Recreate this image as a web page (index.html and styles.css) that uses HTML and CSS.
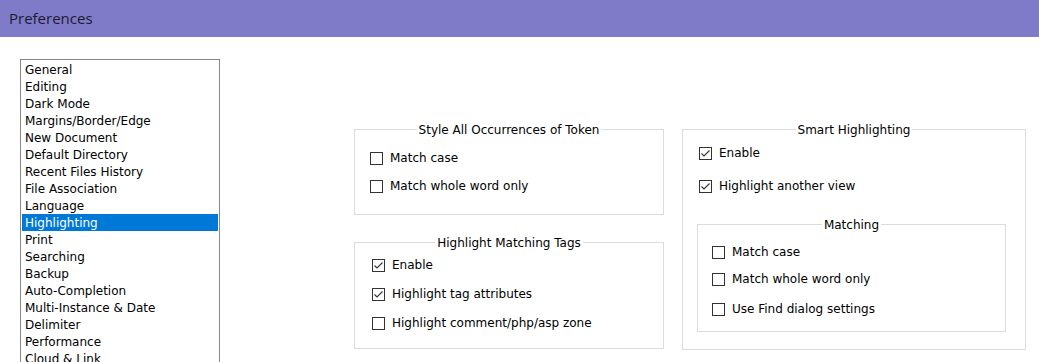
FILE: index.html
```html
<!DOCTYPE html>
<html lang="en">
<head>
  <meta charset="UTF-8">
  <title>Preferences</title>
  <link rel="stylesheet" href="styles.css">
</head>
<body>
  <div class="titlebar">Preferences</div>

  <div class="main">
    <ul class="cats">
      <li>General</li>
      <li>Editing</li>
      <li>Dark Mode</li>
      <li>Margins/Border/Edge</li>
      <li>New Document</li>
      <li>Default Directory</li>
      <li>Recent Files History</li>
      <li>File Association</li>
      <li>Language</li>
      <li class="selected">Highlighting</li>
      <li>Print</li>
      <li>Searching</li>
      <li>Backup</li>
      <li>Auto-Completion</li>
      <li>Multi-Instance &amp; Date</li>
      <li>Delimiter</li>
      <li>Performance</li>
      <li>Cloud &amp; Link</li>
    </ul>

    <div class="col col-left">
      <div class="group g-token">
        <div class="group-title">Style All Occurrences of Token</div>
        <div class="check-row"><span class="box"></span>Match case</div>
        <div class="check-row"><span class="box"></span>Match whole word only</div>
      </div>

      <div class="group g-tags">
        <div class="group-title">Highlight Matching Tags</div>
        <div class="check-row"><span class="box checked"><svg viewBox="0 0 11 11"><polyline points="1.5,5.5 4,8 9.5,2.5"/></svg></span>Enable</div>
        <div class="check-row"><span class="box checked"><svg viewBox="0 0 11 11"><polyline points="1.5,5.5 4,8 9.5,2.5"/></svg></span>Highlight tag attributes</div>
        <div class="check-row"><span class="box"></span>Highlight comment/php/asp zone</div>
      </div>
    </div>

    <div class="col col-right">
      <div class="group g-smart">
        <div class="group-title">Smart Highlighting</div>
        <div class="check-row"><span class="box checked"><svg viewBox="0 0 11 11"><polyline points="1.5,5.5 4,8 9.5,2.5"/></svg></span>Enable</div>
        <div class="check-row"><span class="box checked"><svg viewBox="0 0 11 11"><polyline points="1.5,5.5 4,8 9.5,2.5"/></svg></span>Highlight another view</div>

        <div class="group g-matching">
          <div class="group-title">Matching</div>
          <div class="check-row"><span class="box"></span>Match case</div>
          <div class="check-row"><span class="box"></span>Match whole word only</div>
          <div class="check-row"><span class="box"></span>Use Find dialog settings</div>
        </div>
      </div>
    </div>
  </div>
</body>
</html>
```

FILE: styles.css
```css
html, body {
  margin: 0;
  height: 100%;
  overflow: hidden;
  background: #fff;
}
body {
  font-family: 'DejaVu Sans', sans-serif;
  font-size: 12px;
  color: #000;
}
.titlebar {
  height: 37px;
  line-height: 37px;
  padding-left: 9px;
  background: #807bc8;
  color: #1b1a30;
  font-family: 'Open Sans', sans-serif;
  font-size: 15px;
}
.main {
  display: flex;
  align-items: flex-start;
}

/* category list */
.cats {
  list-style: none;
  margin: 22px 0 0 20px;
  padding: 1px;
  width: 200px;
  height: 340px;
  box-sizing: border-box;
  border: 1px solid #828790;
}
.cats li {
  height: 17px;
  line-height: 19px;
  overflow: hidden;
  padding-left: 3px;
  white-space: nowrap;
}
.cats li.selected { background: #0078d7; color: #fff; }

/* columns */
.col { margin-top: 92px; }
.col-left { margin-left: 134px; width: 310px; }
.col-right { margin-left: 18px; width: 344px; }

/* group boxes */
.group {
  border: 1px solid #dcdcdc;
  display: flex;
  flex-direction: column;
  align-items: flex-start;
}
.group-title {
  align-self: center;
  margin-top: -8px;
  padding: 0 2px;
  line-height: 16px;
  background: #fff;
  white-space: nowrap;
}
.check-row {
  display: flex;
  align-items: center;
  height: 20px;
  line-height: 21px;
  white-space: nowrap;
}
.box {
  width: 13px;
  height: 13px;
  box-sizing: border-box;
  border: 1px solid #333;
  margin-right: 7px;
  background: #fff;
  display: flex;
}
.box svg { width: 11px; height: 11px; }
.box polyline {
  fill: none;
  stroke: #333;
  stroke-width: 1.1;
}

.g-token { padding-bottom: 18px; }
.g-token .check-row { margin-left: 15px; margin-top: 8px; }
.g-token .group-title + .check-row { margin-top: 10px; }

.g-tags { margin-top: 27px; padding-bottom: 15px; }
.g-tags .check-row { margin-left: 17px; margin-top: 9px; }
.g-tags .group-title + .check-row { margin-top: 4px; }

.g-smart { padding-bottom: 17px; }
.g-smart > .check-row { margin-left: 16px; margin-top: 13px; }
.g-smart > .group-title + .check-row { margin-top: 5px; }

.g-matching {
  margin: 28px 0 0 14px;
  width: 309px;
  box-sizing: border-box;
  padding-bottom: 12px;
}
.g-matching .check-row { margin-left: 14px; margin-top: 7px; }
.g-matching .group-title + .check-row { margin-top: 9px; }
.g-matching .check-row:last-child { margin-top: 10px; }
```
